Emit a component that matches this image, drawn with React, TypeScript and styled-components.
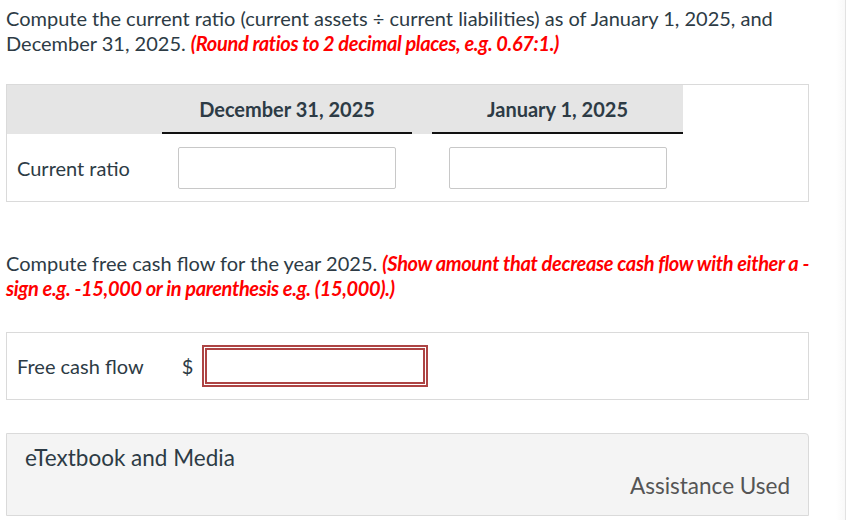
import React from 'react';
import styled, { createGlobalStyle } from 'styled-components';

const GlobalStyle = createGlobalStyle`
    html, body {
        margin: 0;
        padding: 0;
        background: #ffffff;
    }
    body {
        font-family: Lato, "Open Sans", "Liberation Sans", sans-serif;
        color: #2d3b45;
    }
`;

const Page = styled.div`
    width: 846px;
    height: 520px;
    overflow: hidden;
    box-sizing: border-box;
    border-right: 1px solid #e2e2e2;
    background: linear-gradient(to right, #ffffff 0, #ffffff 836px, #f8f8f8 846px);
    padding: 6px 0 0 6px;
`;

const Content = styled.div`
    width: 803px;
`;

const Prompt = styled.p<{ $top?: number }>`
    margin: ${p => p.$top || 0}px 0 0 0;
    width: 815px;
    font-size: 20px;
    line-height: 25px;
    color: #2d3b45;
`;

const Hint = styled.span`
    color: #ff0000;
    font-weight: 700;
    font-style: italic;
    letter-spacing: -0.35px;
`;

const Panel = styled.div<{ $top: number }>`
    margin-top: ${p => p.$top}px;
    border: 1px solid #dadada;
    box-sizing: border-box;
`;

const Grid = styled.div`
    display: grid;
    grid-template-columns: 155px 250px 20px 251px;
`;

const HeadCell = styled.div<{ $line?: boolean }>`
    background: #e5e5e5;
    height: 47px;
    display: flex;
    align-items: center;
    justify-content: center;
    font-size: 20px;
    font-weight: 700;
    color: #2d3b45;
    border-bottom: 2px solid ${p => (p.$line ? '#111' : 'transparent')};
`;

const RowLabel = styled.div`
    height: 67px;
    display: flex;
    align-items: center;
    padding-left: 10px;
    font-size: 20px;
    color: #2d3b45;
`;

const RowCell = styled.div`
    height: 67px;
    display: flex;
    align-items: center;
    justify-content: center;
`;

const TextBox = styled.div`
    width: 218px;
    height: 42px;
    box-sizing: border-box;
    border: 1px solid #c8c8c8;
    border-radius: 2px;
    background: #fff;
`;

const CashRow = styled.div`
    height: 66px;
    display: flex;
    align-items: center;
    padding-left: 10px;
    font-size: 20px;
    color: #2d3b45;
`;

const Dollar = styled.span`
    margin-left: 38px;
    margin-right: 9px;
`;

const ErrorBox = styled.div`
    width: 226px;
    height: 42px;
    box-sizing: border-box;
    border: 2px solid #ad4444;
    box-shadow: inset 0 0 0 1px #ffffff, inset 0 0 0 3px #ad4444;
    background: #fff;
`;

const Media = styled.div`
    margin-top: 33px;
    height: 83px;
    background: #f4f4f4;
    border: 1px solid #dadada;
    border-top-right-radius: 4px;
    box-sizing: border-box;
    padding: 10px 18px 0 18px;
    display: flex;
    flex-direction: column;
`;

const MediaTitle = styled.div`
    font-size: 22.5px;
    line-height: 28px;
    color: #2d3b45;
`;

const Assist = styled.div`
    align-self: flex-end;
    font-size: 22.5px;
    line-height: 28px;
    color: #555555;
`;

export default function App() {
    return (
        <>
            <GlobalStyle />
            <Page>
                <Content>
                    <Prompt>
                        Compute the current ratio (current assets ÷ current liabilities) as of January 1, 2025, and
                        December 31, 2025. <Hint>(Round ratios to 2 decimal places, e.g. 0.67:1.)</Hint>
                    </Prompt>

                    <Panel $top={28}>
                        <Grid>
                            <HeadCell />
                            <HeadCell $line>December 31, 2025</HeadCell>
                            <HeadCell />
                            <HeadCell $line>January 1, 2025</HeadCell>
                            <RowLabel>Current ratio</RowLabel>
                            <RowCell><TextBox /></RowCell>
                            <RowCell />
                            <RowCell><TextBox /></RowCell>
                        </Grid>
                    </Panel>

                    <Prompt $top={49}>
                        Compute free cash flow for the year 2025. <Hint>(Show amount that decrease cash flow with either a{'\u00a0'}-
                        sign e.g. -15,000 or in parenthesis e.g. (15,000).)</Hint>
                    </Prompt>

                    <Panel $top={31}>
                        <CashRow>
                            Free cash flow
                            <Dollar>$</Dollar>
                            <ErrorBox />
                        </CashRow>
                    </Panel>

                    <Media>
                        <MediaTitle>eTextbook and Media</MediaTitle>
                        <Assist>Assistance Used</Assist>
                    </Media>
                </Content>
            </Page>
        </>
    );
}
